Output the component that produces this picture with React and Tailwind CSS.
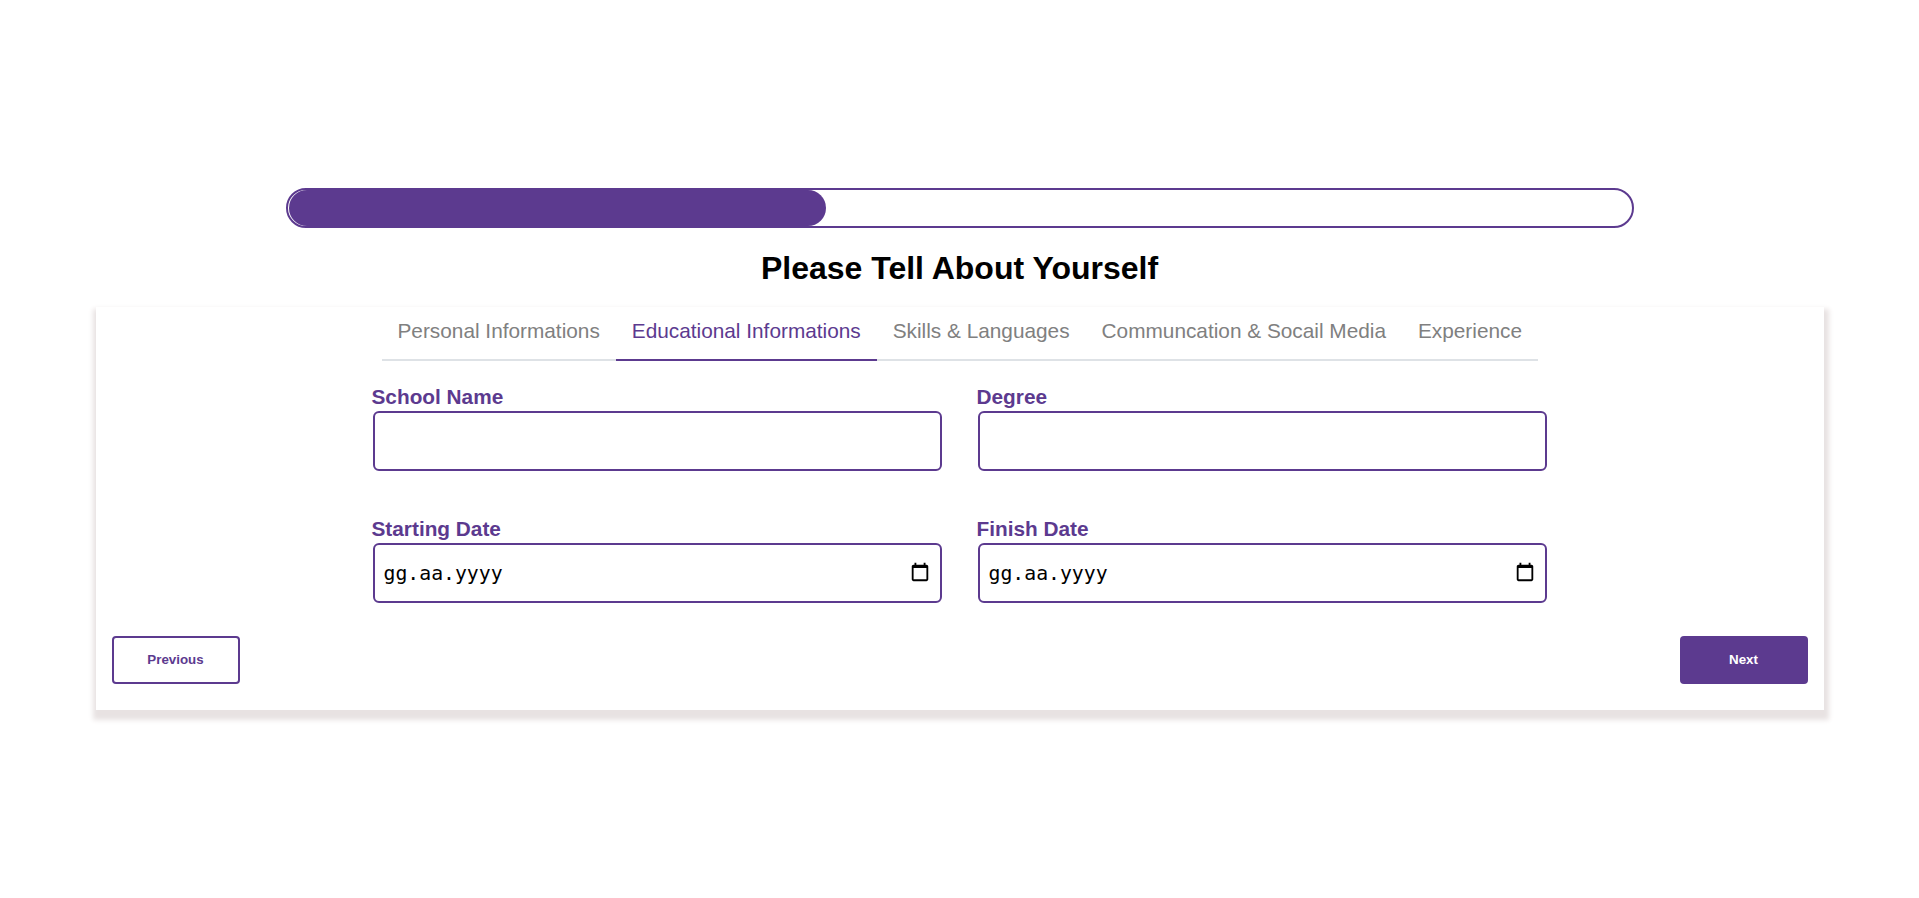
const tabs = [
  { label: "Personal Informations" },
  { label: "Educational Informations", active: true },
  { label: "Skills & Languages" },
  { label: "Communcation & Socail Media" },
  { label: "Experience" },
];

function CalendarIcon() {
  return (
    <svg viewBox="0 0 24 24" className="absolute right-[11px] top-[18px] h-[22px] w-[22px] text-black" fill="currentColor">
      <path d="M19 4h-1V2h-2v2H8V2H6v2H5c-1.1 0-2 .9-2 2v14c0 1.1.9 2 2 2h14c1.1 0 2-.9 2-2V6c0-1.1-.9-2-2-2zm0 16H5V7.5h14V20z" />
    </svg>
  );
}

function Field({ label, date }) {
  return (
    <div className="flex w-[605px] flex-col">
      <label className="h-[26px] text-[20.8px] leading-[24px] font-bold text-[#5c3a8f]">{label}</label>
      <div className="relative ml-[1px] h-[60px] w-[569px]">
        {date ? (
          <>
            <input
              type="text"
              readOnly
              value="gg.aa.yyyy"
              className="h-full w-full rounded-[6px] border-2 border-[#5c3a8f] bg-white px-[9px] font-['DejaVu_Sans_Mono',monospace] text-[19.8px] text-black outline-none"
            />
            <CalendarIcon />
          </>
        ) : (
          <input type="text" className="h-full w-full rounded-[6px] border-2 border-[#5c3a8f] bg-white outline-none" />
        )}
      </div>
    </div>
  );
}

export default function App() {
  return (
    <div className="flex min-h-screen flex-col items-center bg-white pt-[188px] font-['Liberation_Sans',Arial,sans-serif]">
      {/* progress */}
      <div className="h-[40px] w-[1348px] rounded-[20px] border-2 border-[#5c3a8f] bg-white">
        <div className="ml-[1px] h-full w-[537px] rounded-[18px] bg-[#5c3a8f]"></div>
      </div>

      <h1 className="mt-[19px] h-[60px] text-[32px] leading-[42px] font-bold text-black">Please Tell About Yourself</h1>

      <div className="h-[403px] w-[1728px] bg-white px-[16px] shadow-[1px_6px_5px_4px_#e8e2e2]">
        <ul className="mx-auto flex h-[54px] w-[1156px] border-b-2 border-[#dee2e6]">
          {tabs.map((tab) => (
            <li
              key={tab.label}
              className={
                tab.active
                  ? "h-[54px] border-b-2 border-[#5c3a8f] px-4 pt-[9px] text-[20.8px] leading-[30px] whitespace-nowrap text-[#5c3a8f]"
                  : "px-4 pt-[9px] text-[20.8px] leading-[30px] whitespace-nowrap text-[#808080]"
              }
            >
              {tab.label}
            </li>
          ))}
        </ul>

        <div className="mt-[24px] ml-[260px] grid grid-cols-[605px_605px] gap-y-[46px]">
          <Field label="School Name" />
          <Field label="Degree" />
          <Field label="Starting Date" date />
          <Field label="Finish Date" date />
        </div>

        <div className="mt-[33px] flex justify-between">
          <button className="h-[48px] w-[128px] rounded-[4px] border-2 border-[#5c3a8f] bg-white text-[13.33px] font-semibold text-[#5c3a8f]">Previous</button>
          <button className="h-[48px] w-[128px] rounded-[4px] bg-[#5c3a8f] text-[13.33px] font-semibold text-white">Next</button>
        </div>
      </div>
    </div>
  );
}
